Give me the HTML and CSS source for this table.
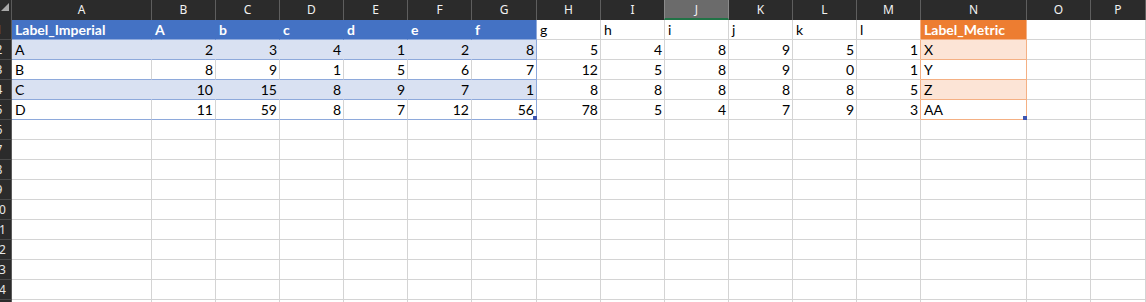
FILE: index.html
```html
<!DOCTYPE html>
<html>
<head>
<meta charset="utf-8">
<link rel="stylesheet" href="styles.css">
</head>
<body>
<div class="sheet">
  <div class="row hdr">
    <div class="corner"><svg width="11" height="19" viewBox="0 0 11 19"><polygon points="9,3 9,11 1,11" fill="#a9a9a9"/></svg></div>
    <div class="ch">A</div><div class="ch">B</div><div class="ch">C</div><div class="ch">D</div><div class="ch">E</div><div class="ch">F</div><div class="ch">G</div><div class="ch">H</div><div class="ch">I</div><div class="ch sel">J</div><div class="ch">K</div><div class="ch">L</div><div class="ch">M</div><div class="ch">N</div><div class="ch">O</div><div class="ch">P</div>
  </div>
  <div class="row">
    <div class="rh"><span>1</span></div>
    <div class="c th">Label_Imperial</div><div class="c th">A</div><div class="c th">b</div><div class="c th">c</div><div class="c th">d</div><div class="c th">e</div><div class="c th tend">f</div>
    <div class="c">g</div><div class="c">h</div><div class="c">i</div><div class="c">j</div><div class="c">k</div><div class="c oedge">l</div>
    <div class="c oh">Label_Metric</div><div class="c"></div><div class="c"></div>
  </div>
  <div class="row">
    <div class="rh"><span>2</span></div>
    <div class="c band">A</div><div class="c band n">2</div><div class="c band n">3</div><div class="c band n">4</div><div class="c band n">1</div><div class="c band n">2</div><div class="c band n tend">8</div>
    <div class="c n">5</div><div class="c n">4</div><div class="c n">8</div><div class="c n">9</div><div class="c n">5</div><div class="c n oedge">1</div>
    <div class="c oband">X</div><div class="c"></div><div class="c"></div>
  </div>
  <div class="row">
    <div class="rh"><span>3</span></div>
    <div class="c tw">B</div><div class="c tw n">8</div><div class="c tw n">9</div><div class="c tw n">1</div><div class="c tw n">5</div><div class="c tw n">6</div><div class="c tw n tend">7</div>
    <div class="c n">12</div><div class="c n">5</div><div class="c n">8</div><div class="c n">9</div><div class="c n">0</div><div class="c n oedge">1</div>
    <div class="c ow">Y</div><div class="c"></div><div class="c"></div>
  </div>
  <div class="row">
    <div class="rh"><span>4</span></div>
    <div class="c band">C</div><div class="c band n">10</div><div class="c band n">15</div><div class="c band n">8</div><div class="c band n">9</div><div class="c band n">7</div><div class="c band n tend">1</div>
    <div class="c n">8</div><div class="c n">8</div><div class="c n">8</div><div class="c n">8</div><div class="c n">8</div><div class="c n oedge">5</div>
    <div class="c oband">Z</div><div class="c"></div><div class="c"></div>
  </div>
  <div class="row">
    <div class="rh"><span>5</span></div>
    <div class="c tw">D</div><div class="c tw n">11</div><div class="c tw n">59</div><div class="c tw n">8</div><div class="c tw n">7</div><div class="c tw n">12</div><div class="c tw n tend">56<i class="handle blue"></i></div>
    <div class="c n">78</div><div class="c n">5</div><div class="c n">4</div><div class="c n">7</div><div class="c n">9</div><div class="c n oedge">3</div>
    <div class="c ow">AA<i class="handle blue"></i></div><div class="c"></div><div class="c"></div>
  </div>
  <div class="row"><div class="rh"><span>6</span></div><div class="c"></div><div class="c"></div><div class="c"></div><div class="c"></div><div class="c"></div><div class="c"></div><div class="c"></div><div class="c"></div><div class="c"></div><div class="c"></div><div class="c"></div><div class="c"></div><div class="c"></div><div class="c"></div><div class="c"></div><div class="c"></div></div>
  <div class="row"><div class="rh"><span>7</span></div><div class="c"></div><div class="c"></div><div class="c"></div><div class="c"></div><div class="c"></div><div class="c"></div><div class="c"></div><div class="c"></div><div class="c"></div><div class="c"></div><div class="c"></div><div class="c"></div><div class="c"></div><div class="c"></div><div class="c"></div><div class="c"></div></div>
  <div class="row"><div class="rh"><span>8</span></div><div class="c"></div><div class="c"></div><div class="c"></div><div class="c"></div><div class="c"></div><div class="c"></div><div class="c"></div><div class="c"></div><div class="c"></div><div class="c"></div><div class="c"></div><div class="c"></div><div class="c"></div><div class="c"></div><div class="c"></div><div class="c"></div></div>
  <div class="row"><div class="rh"><span>9</span></div><div class="c"></div><div class="c"></div><div class="c"></div><div class="c"></div><div class="c"></div><div class="c"></div><div class="c"></div><div class="c"></div><div class="c"></div><div class="c"></div><div class="c"></div><div class="c"></div><div class="c"></div><div class="c"></div><div class="c"></div><div class="c"></div></div>
  <div class="row"><div class="rh"><span>10</span></div><div class="c"></div><div class="c"></div><div class="c"></div><div class="c"></div><div class="c"></div><div class="c"></div><div class="c"></div><div class="c"></div><div class="c"></div><div class="c"></div><div class="c"></div><div class="c"></div><div class="c"></div><div class="c"></div><div class="c"></div><div class="c"></div></div>
  <div class="row"><div class="rh"><span>11</span></div><div class="c"></div><div class="c"></div><div class="c"></div><div class="c"></div><div class="c"></div><div class="c"></div><div class="c"></div><div class="c"></div><div class="c"></div><div class="c"></div><div class="c"></div><div class="c"></div><div class="c"></div><div class="c"></div><div class="c"></div><div class="c"></div></div>
  <div class="row"><div class="rh"><span>12</span></div><div class="c"></div><div class="c"></div><div class="c"></div><div class="c"></div><div class="c"></div><div class="c"></div><div class="c"></div><div class="c"></div><div class="c"></div><div class="c"></div><div class="c"></div><div class="c"></div><div class="c"></div><div class="c"></div><div class="c"></div><div class="c"></div></div>
  <div class="row"><div class="rh"><span>13</span></div><div class="c"></div><div class="c"></div><div class="c"></div><div class="c"></div><div class="c"></div><div class="c"></div><div class="c"></div><div class="c"></div><div class="c"></div><div class="c"></div><div class="c"></div><div class="c"></div><div class="c"></div><div class="c"></div><div class="c"></div><div class="c"></div></div>
  <div class="row"><div class="rh"><span>14</span></div><div class="c"></div><div class="c"></div><div class="c"></div><div class="c"></div><div class="c"></div><div class="c"></div><div class="c"></div><div class="c"></div><div class="c"></div><div class="c"></div><div class="c"></div><div class="c"></div><div class="c"></div><div class="c"></div><div class="c"></div><div class="c"></div></div>
  <div class="row"><div class="rh"><span>15</span></div><div class="c"></div><div class="c"></div><div class="c"></div><div class="c"></div><div class="c"></div><div class="c"></div><div class="c"></div><div class="c"></div><div class="c"></div><div class="c"></div><div class="c"></div><div class="c"></div><div class="c"></div><div class="c"></div><div class="c"></div><div class="c"></div></div>
</div>
</body>
</html>
```
FILE: styles.css
```css
html, body {
  margin: 0;
  padding: 0;
  background: #ffffff;
  overflow: hidden;
}
.sheet {
  width: 1146px;
  height: 302px;
  overflow: hidden;
}
.row {
  display: grid;
  grid-template-columns: 12px 140px 64px 64px 64px 64px 64px 65px 64px 64px 64px 64px 64px 64px 106px 64px 1fr;
  height: 20px;
}
.hdr .corner,
.hdr .ch {
  background: #2b2b2b;
  box-sizing: border-box;
  height: 20px;
}
.corner {
  border-right: 1px solid #5a5a5a;
}
.corner svg {
  display: block;
}
.ch {
  border-right: 1px solid #5e5e5e;
  color: #f2f2f2;
  font-family: "Noto Sans", "Open Sans", sans-serif;
  font-size: 12px;
  line-height: 20px;
  text-align: center;
}
.ch.sel {
  background: #6b6b6b;
  border-left: 1px solid #8a8a8a;
  border-right: 1px solid #8a8a8a;
  border-bottom: 2px solid #217346;
  line-height: 19px;
  margin-left: -1px;
}
.rh {
  background: #2b2b2b;
  border-right: 1px solid #5a5a5a;
  border-bottom: 1px solid #4a4a4a;
  box-sizing: border-box;
  overflow: hidden;
  display: flex;
}
.rh span {
  flex: 0 0 24px;
  margin-left: -13px;
  text-align: center;
  color: #e6e6e6;
  font-family: "Noto Sans", "Open Sans", sans-serif;
  font-size: 12px;
  line-height: 19px;
}
.c {
  position: relative;
  box-sizing: border-box;
  border-right: 1px solid #d4d4d4;
  border-bottom: 1px solid #d4d4d4;
  padding: 0 3px;
  font-family: Lato, "Liberation Sans", sans-serif;
  font-size: 14px;
  line-height: 19px;
  color: #000000;
  white-space: nowrap;
  overflow: visible;
}
.n {
  text-align: right;
  padding-right: 2px;
}
.th {
  background: #4472c4;
  color: #ffffff;
  font-weight: bold;
  border-right-color: #4472c4;
  border-bottom-color: #8ea9db;
}
.band {
  background: #d9e1f2;
  border-right-color: #d9e1f2;
  border-bottom-color: #8ea9db;
}
.tw {
  border-bottom-color: #8ea9db;
}
.tend {
  border-right-color: #8ea9db;
}
.oedge {
  border-right-color: #f4b084;
}
.oh {
  background: #ed7d31;
  color: #ffffff;
  font-weight: bold;
  border-right-color: #f4b084;
  border-bottom-color: #f4b084;
}
.oband {
  background: #fce4d6;
  border-right-color: #f4b084;
  border-bottom-color: #f4b084;
}
.ow {
  border-right-color: #f4b084;
  border-bottom-color: #f4b084;
}
.handle {
  position: absolute;
  right: -1px;
  bottom: -1px;
  width: 4px;
  height: 4px;
}
.handle.blue {
  background: #3f56b0;
}
```
